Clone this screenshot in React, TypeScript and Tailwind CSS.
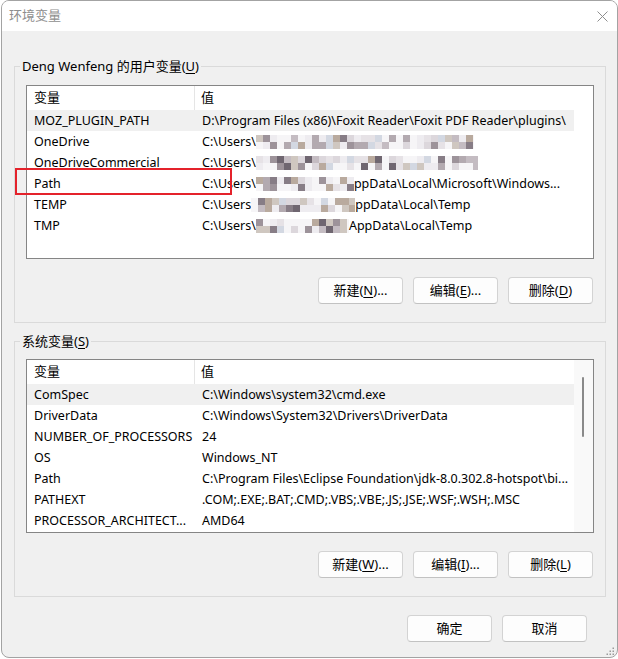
import React from 'react';

// pixelated blur that hides the user name in paths
const PALETTE = [
  '#f6f5f7', '#eeecf0', '#e6e2e6', '#dcd7dc', '#d3d8e2', '#cfc7c0',
  '#c4bcc2', '#b3aab0', '#b9aa9e', '#9d939a', '#877d86', '#6f6670',
];

function Mosaic({ width, seed }: { width: number; seed: number }) {
  let s = seed;
  const rand = () => {
    s = (s * 9301 + 49297) % 233280;
    return s / 233280;
  };
  const cols = Math.ceil(width / 7);
  const cells = Array.from({ length: cols * 2 }, () => {
    const r = rand();
    return PALETTE[Math.floor(r * r * PALETTE.length)];
  });
  return (
    <span
      className="inline-grid align-middle overflow-hidden -mt-[2px]"
      style={{ width, gridTemplateColumns: `repeat(${cols}, 7px)`, gridTemplateRows: '7px 7px' }}
    >
      {cells.map((c, i) => (
        <span key={i} style={{ background: c }} />
      ))}
    </span>
  );
}

interface Row {
  name: string;
  value: React.ReactNode;
}

const USER_ROWS: Row[] = [
  { name: 'MOZ_PLUGIN_PATH', value: 'D:\\Program Files (x86)\\Foxit Reader\\Foxit PDF Reader\\plugins\\' },
  { name: 'OneDrive', value: <>C:\Users\<Mosaic width={218} seed={11} /></> },
  { name: 'OneDriveCommercial', value: <>C:\Users\<Mosaic width={222} seed={57} /></> },
  { name: 'Path', value: <>C:\Users\<Mosaic width={98} seed={91} />ppData\Local\Microsoft\Windows...</> },
  { name: 'TEMP', value: <>C:\Users<Mosaic width={104} seed={23} />ppData\Local\Temp</> },
  { name: 'TMP', value: <>C:\Users\<Mosaic width={93} seed={143} />AppData\Local\Temp</> },
];

const SYSTEM_ROWS: Row[] = [
  { name: 'ComSpec', value: 'C:\\Windows\\system32\\cmd.exe' },
  { name: 'DriverData', value: 'C:\\Windows\\System32\\Drivers\\DriverData' },
  { name: 'NUMBER_OF_PROCESSORS', value: '24' },
  { name: 'OS', value: 'Windows_NT' },
  { name: 'Path', value: 'C:\\Program Files\\Eclipse Foundation\\jdk-8.0.302.8-hotspot\\bi...' },
  { name: 'PATHEXT', value: '.COM;.EXE;.BAT;.CMD;.VBS;.VBE;.JS;.JSE;.WSF;.WSH;.MSC' },
  { name: 'PROCESSOR_ARCHITECT...', value: 'AMD64' },
];

function Button({ label, accel, dots }: { label: string; accel?: string; dots?: boolean }) {
  return (
    <button className="w-[85px] h-[27px] rounded-[4px] border border-[#d3d3d3] border-b-[#c2c2c2] bg-[#fdfdfd] text-[13px] text-black flex items-center justify-center">
      {label}
      {accel && (
        <>
          (<span className="underline underline-offset-2">{accel}</span>)
        </>
      )}
      {dots && '...'}
    </button>
  );
}

function VarList({ rows, scroll }: { rows: Row[]; scroll?: boolean }) {
  return (
    <div className="h-[174px] border border-[#858585] bg-white flex overflow-hidden">
      <div className="w-[547px] flex flex-col">
        <div className="h-[24px] flex shrink-0 text-[13px]">
          <div className="w-[168px] pl-[7px] flex items-center border-r border-[#e5e5e5]">变量</div>
          <div className="flex-1 pl-[6px] flex items-center">值</div>
        </div>
        {rows.map((r, i) => (
          <div
            key={r.name + i}
            className={`h-[21px] shrink-0 flex text-[12.5px] leading-[21px] whitespace-nowrap ${i === 0 ? 'bg-[#f0f0f0]' : ''}`}
          >
            <div className="w-[168px] pl-[7px] overflow-hidden">{r.name}</div>
            <div className="flex-1 pl-[7px] overflow-hidden">{r.value}</div>
          </div>
        ))}
      </div>
      <div className={`flex-1 relative ${scroll ? 'bg-[#f9f9f9]' : ''}`}>
        {scroll && <div className="absolute left-[8px] top-[17px] w-[2px] h-[60px] rounded-full bg-[#8a8a8a]" />}
      </div>
    </div>
  );
}

export default function App() {
  return (
    <div className="w-[618px] h-[659px] bg-white font-['Noto_Sans','Noto_Sans_CJK_SC',sans-serif] text-black">
      <div className="relative ml-px w-[617px] h-[658px] rounded-[8px] border border-[#a3a3a3] bg-[#f0f0f0] flex flex-col overflow-hidden">
        {/* Title bar */}
        <div className="h-[30px] shrink-0 bg-white flex items-center justify-between pl-[7px] pr-[9px]">
          <span className="text-[13px] text-[#8e8e8e]">环境变量</span>
          <svg width="11" height="11" viewBox="0 0 11 11" className="text-[#8e8e8e]">
            <path d="M0.5 0.5 L10.5 10.5 M10.5 0.5 L0.5 10.5" stroke="currentColor" strokeWidth="1" />
          </svg>
        </div>

        <div className="flex flex-col pl-[12px] pr-[11px]">
          {/* User variables */}
          <fieldset className="mt-[26px] border border-[#dadada] px-[5px] pt-[10px] pb-[18px]">
            <legend className="px-[2px] text-[13px] leading-[18px]">
              Deng Wenfeng 的用户变量(<span className="underline underline-offset-2">U</span>)
            </legend>
            <div className="px-[6px]">
              <VarList rows={USER_ROWS} />
              <div className="mt-[18px] flex justify-end gap-[10px] pr-px">
                <Button label="新建" accel="N" dots />
                <Button label="编辑" accel="E" dots />
                <Button label="删除" accel="D" />
              </div>
            </div>
          </fieldset>

          {/* System variables */}
          <fieldset className="mt-[9px] border border-[#dadada] px-[5px] pt-[9px] pb-[18px]">
            <legend className="px-[2px] text-[13px] leading-[18px]">
              系统变量(<span className="underline underline-offset-2">S</span>)
            </legend>
            <div className="px-[6px]">
              <VarList rows={SYSTEM_ROWS} scroll />
              <div className="mt-[18px] flex justify-end gap-[10px] pr-px">
                <Button label="新建" accel="W" dots />
                <Button label="编辑" accel="I" dots />
                <Button label="删除" accel="L" />
              </div>
            </div>
          </fieldset>

          <div className="mt-[18px] flex justify-end gap-[10px] pr-[19px]">
            <Button label="确定" />
            <Button label="取消" />
          </div>
        </div>

        {/* red highlight drawn over the Path row */}
        <div className="absolute left-[13px] top-[167px] w-[217px] h-[27px] border-2 border-[#e4222b]" />

        {/* resize grip */}
        <svg width="10" height="10" viewBox="0 0 10 10" className="absolute right-[2px] bottom-[1px] text-[#9a9a9a]">
          <rect x="7.5" y="1.5" width="1.5" height="1.5" fill="currentColor" />
          <rect x="4.5" y="4.5" width="1.5" height="1.5" fill="currentColor" />
          <rect x="7.5" y="4.5" width="1.5" height="1.5" fill="currentColor" />
          <rect x="1.5" y="7.5" width="1.5" height="1.5" fill="currentColor" />
          <rect x="4.5" y="7.5" width="1.5" height="1.5" fill="currentColor" />
          <rect x="7.5" y="7.5" width="1.5" height="1.5" fill="currentColor" />
        </svg>
      </div>
    </div>
  );
}
